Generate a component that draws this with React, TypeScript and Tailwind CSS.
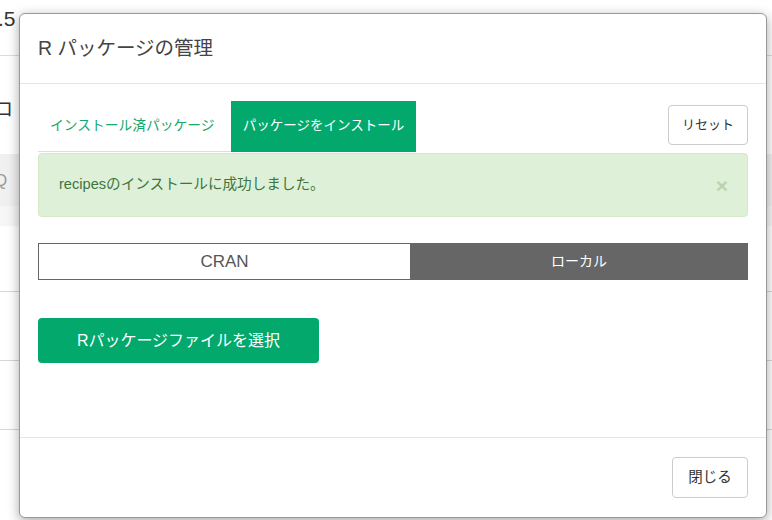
import React from "react";

export default function App() {
  const font = { fontFamily: '"Liberation Sans", "Noto Sans CJK JP", sans-serif' };
  return (
    <div className="relative w-[772px] h-[520px] overflow-hidden bg-white" style={font}>
      {/* background page */}
      <div className="flex flex-col w-full">
        <div className="h-[56px] border-b border-[#dcdcdc] text-[21px] text-[#333] leading-none pt-[8px] -ml-[2px]">.5</div>
        <div className="h-[98px] text-[19px] text-[#333] pt-[40px] -ml-[6px]">ロ</div>
        <div className="h-[52px] bg-[#f0f0f0] text-[#999] text-[17px] pt-[14px] -ml-[6px]">Q</div>
        <div className="h-[20px] bg-[#f6f6f6]" />
        <div className="h-[66px] border-b border-[#d6d6d6]" />
        <div className="h-[69px] border-b border-[#d6d6d6]" />
        <div className="h-[69px] border-b border-[#d6d6d6]" />
      </div>

      {/* modal */}
      <div className="absolute left-[19px] top-[13px] w-[748px] h-[505px] bg-white rounded-[6px] border border-[#999] shadow-[0_3px_12px_rgba(0,0,0,0.35)] flex flex-col">
        <div className="h-[70px] border-b border-[#e5e5e5] flex items-center px-[18px]">
          <h1 className="text-[19.5px] text-[#444] font-normal">R パッケージの管理</h1>
        </div>
        <div className="flex-1 px-[18px] pt-[17px]">
          <div className="flex items-end h-[51px]">
            <div className="flex h-full">
              <div className="h-full w-[193px] flex items-center pl-[12px] text-[13.75px] text-[#16a56b] border-b border-[#ddd]">インストール済パッケージ</div>
              <div className="h-full w-[185px] flex items-center justify-center text-[13.5px] text-white bg-[#03a96c]">パッケージをインストール</div>
            </div>
            <div className="flex-1 self-start flex justify-end pt-[4px]">
              <button className="h-[40px] w-[80px] border border-[#ccc] rounded-[4px] text-[13px] text-[#333] bg-white">リセット</button>
            </div>
          </div>
          <div className="mt-[1px] h-[64px] bg-[#dff0d8] border border-[#d6e9c6] rounded-[4px] flex items-center justify-between pl-[20px] pr-[19px]">
            <span className="text-[14.6px] text-[#3c763d]">recipesのインストールに成功しました。</span>
            <span className="text-[21px] font-bold text-[#b9d4b0] leading-none">×</span>
          </div>
          <div className="mt-[26px] h-[37px] flex">
            <div className="w-[372px] border border-[#666] border-r-0 flex items-center justify-center text-[17px] text-[#555]">CRAN</div>
            <div className="flex-1 bg-[#666] flex items-center justify-center text-[14px] text-white">ローカル</div>
          </div>
          <button className="mt-[38px] h-[45px] w-[281px] bg-[#03a96c] rounded-[4px] text-white text-[16px]">Rパッケージファイルを選択</button>
        </div>
        <div className="h-[80px] border-t border-[#e5e5e5] flex items-center justify-end px-[18px]">
          <button className="h-[41px] w-[76px] border border-[#ccc] rounded-[4px] text-[14.5px] text-[#333] bg-white">閉じる</button>
        </div>
      </div>
    </div>
  );
}
